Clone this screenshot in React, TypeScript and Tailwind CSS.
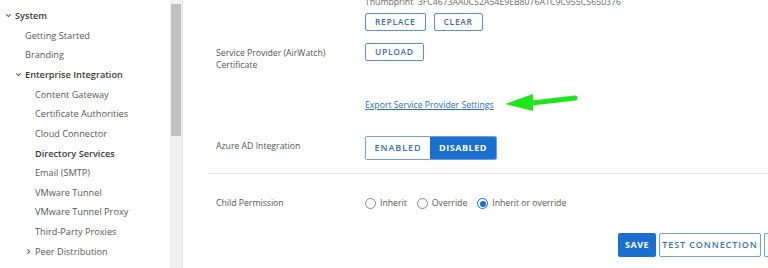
import React from "react";

const font = { fontFamily: '"Open Sans", "Noto Sans", sans-serif' };

function Chevron({ open }: { open: boolean }) {
  return (
    <svg width="7" height="7" viewBox="0 0 8 8" className={open ? "" : "-rotate-90"}>
      <path d="M1.5 2.8 L4 5.2 L6.5 2.8" fill="none" stroke="#555" strokeWidth="1.2" />
    </svg>
  );
}

type NavItem = { label: string; level: number; chevron?: "open" | "closed"; bold?: boolean };

const nav: NavItem[] = [
  { label: "System", level: 0, chevron: "open", bold: true },
  { label: "Getting Started", level: 1 },
  { label: "Branding", level: 1 },
  { label: "Enterprise Integration", level: 1, chevron: "open", bold: true },
  { label: "Content Gateway", level: 2 },
  { label: "Certificate Authorities", level: 2 },
  { label: "Cloud Connector", level: 2 },
  { label: "Directory Services", level: 2, bold: true },
  { label: "Email (SMTP)", level: 2 },
  { label: "VMware Tunnel", level: 2 },
  { label: "VMware Tunnel Proxy", level: 2 },
  { label: "Third-Party Proxies", level: 2 },
  { label: "Peer Distribution", level: 2, chevron: "closed" },
];

function OutlineButton({ children, className = "" }: { children: React.ReactNode; className?: string }) {
  return (
    <button
      className={`h-[18px] px-[9px] rounded-[2px] border border-[#5b8fd4] bg-white text-[8.5px] font-semibold tracking-[0.08em] text-[#3d6fb8] leading-none ${className}`}
    >
      {children}
    </button>
  );
}

function Radio({ checked, label }: { checked?: boolean; label: string }) {
  return (
    <label className="flex items-center gap-[4px] text-[8.7px] text-[#555]">
      <span
        className={`w-[11px] h-[11px] rounded-full border flex items-center justify-center ${
          checked ? "border-[#1a6fcf]" : "border-[#8a8a8a]"
        }`}
      >
        {checked && <span className="w-[6px] h-[6px] rounded-full bg-[#1a6fcf]" />}
      </span>
      {label}
    </label>
  );
}

export default function App() {
  return (
    <div className="relative w-[768px] h-[268px] flex overflow-hidden bg-white" style={font}>
      {/* sidebar */}
      <div className="w-[170px] shrink-0 pt-[6px]">
        {nav.map((item) => (
          <div
            key={item.label}
            className={`h-[19.67px] flex items-center text-[9.2px] whitespace-nowrap ${
              item.bold ? "font-semibold text-[#3a3a3a]" : "text-[#585858]"
            }`}
            style={{ paddingLeft: item.level === 0 ? 15 : item.level === 1 ? 25 : 35 }}
          >
            {item.chevron && (
              <span className="w-[10px] -ml-[10px] flex items-center">
                <Chevron open={item.chevron === "open"} />
              </span>
            )}
            {item.label}
          </div>
        ))}
      </div>

      {/* scrollbar */}
      <div className="w-[13px] shrink-0 bg-[#f1f1f1] pt-[4px] border-r border-[#dce3ec]">
        <div className="mx-auto w-[10px] h-[132px] bg-[#c1c1c1]" />
      </div>

      {/* main */}
      <div className="flex-1 pl-[25px] text-[8.7px] text-[#555]">
        <div className="pl-[157px] -mt-[4px] h-[12px] whitespace-nowrap text-[8.7px] text-[#6a6a6a]">
          Thumbprint&nbsp;&nbsp;3FC4673AA0C52A54E9EB8076A1C9C955C5650376
        </div>
        <div className="pl-[157px] mt-[5px] flex gap-[8px]">
          <OutlineButton>REPLACE</OutlineButton>
          <OutlineButton>CLEAR</OutlineButton>
        </div>

        <div className="mt-[12px] flex">
          <div className="w-[157px] pl-[8px] pt-[4px] leading-[12px]">
            Service Provider (AirWatch)
            <br />
            Certificate
          </div>
          <OutlineButton>UPLOAD</OutlineButton>
        </div>

        <div className="pl-[157px] mt-[28px]">
          <a className="text-[8.7px] text-[#2b6cc4] underline">Export Service Provider Settings</a>
        </div>

        <div className="mt-[24px] flex items-center">
          <div className="w-[157px] pl-[8px] -mt-[3px]">Azure AD Integration</div>
          <div className="flex h-[24px] rounded-[2px] border border-[#6f9fdc] overflow-hidden">
            <div className="w-[64px] flex items-center justify-center bg-white text-[9px] font-semibold tracking-[0.1em] text-[#3d6fb8]">
              ENABLED
            </div>
            <div className="w-[66px] flex items-center justify-center bg-[#1a6fcf] text-[9px] font-bold tracking-[0.06em] text-white">
              DISABLED
            </div>
          </div>
        </div>

        <div className="mt-[13px] h-px bg-[#e3e6ea]" />

        <div className="mt-[23px] flex items-center">
          <div className="w-[157px] pl-[8px]">Child Permission</div>
          <div className="flex gap-[10px]">
            <Radio label="Inherit" />
            <Radio label="Override" />
            <Radio checked label="Inherit or override" />
          </div>
        </div>

        <div className="mt-[23px] flex justify-end gap-[3px] -mr-[10px]">
          <button className="h-[24px] w-[38px] rounded-[2px] bg-[#1a6fcf] text-[9px] font-bold tracking-[0.05em] text-white">
            SAVE
          </button>
          <button className="h-[24px] w-[102px] rounded-[2px] border border-[#6f9fdc] bg-white text-[9px] font-semibold tracking-[0.1em] text-[#3d6fb8]">
            TEST CONNECTION
          </button>
          <button className="h-[24px] w-[14px] rounded-l-[2px] border border-r-0 border-[#6f9fdc] bg-white" />
        </div>
      </div>

      {/* annotation arrow */}
      <svg className="absolute left-[500px] top-[88px]" width="82" height="28" viewBox="0 0 82 28">
        <path d="M32 15 L75 10" stroke="#1ee61a" strokeWidth="5" strokeLinecap="round" />
        <path d="M5 16 L33 6 L33 23 Z" fill="#1ee61a" />
      </svg>
    </div>
  );
}
